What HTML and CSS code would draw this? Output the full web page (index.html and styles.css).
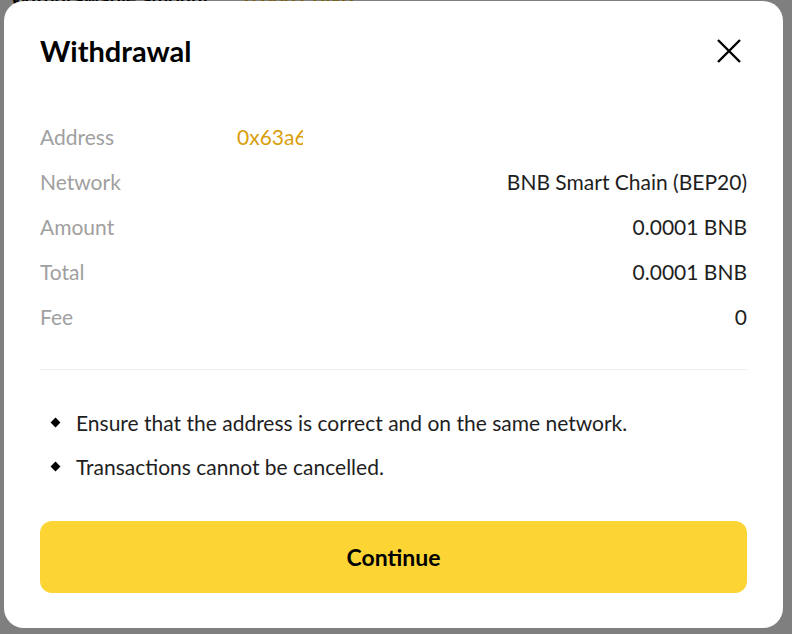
FILE: index.html
```html
<!DOCTYPE html>
<html lang="en">
<head>
    <meta charset="UTF-8">
    <meta name="viewport" content="width=device-width, initial-scale=1.0">
    <title>Withdrawal</title>
    <link rel="stylesheet" href="styles.css">
</head>
<body>
    <div class="page">
        <div class="page-line">Withdrawable amount <span class="page-accent">0.0001 BNB</span></div>
        <div class="page-foot">000.70000 BNB</div>
    </div>

    <div class="overlay">
        <div class="modal">
            <div class="modal-header">
                <h2>Withdrawal</h2>
                <button class="close-btn" aria-label="Close">
                    <svg width="24" height="24" viewBox="0 0 24 24">
                        <path d="M1 1L23 23M23 1L1 23" stroke="#000" stroke-width="2.4" fill="none"/>
                    </svg>
                </button>
            </div>

            <div class="details">
                <div class="detail-row">
                    <span class="label">Address</span>
                    <span class="address">0x63a6f1c9e0b52d7a4c18e3f09b6d2a75c4e81f30</span>
                </div>
                <div class="detail-row">
                    <span class="label">Network</span>
                    <span class="value">BNB Smart Chain (BEP20)</span>
                </div>
                <div class="detail-row">
                    <span class="label">Amount</span>
                    <span class="value">0.0001 BNB</span>
                </div>
                <div class="detail-row">
                    <span class="label">Total</span>
                    <span class="value">0.0001 BNB</span>
                </div>
                <div class="detail-row">
                    <span class="label">Fee</span>
                    <span class="value">0</span>
                </div>
            </div>

            <ul class="notes">
                <li>Ensure that the address is correct and on the same network.</li>
                <li>Transactions cannot be cancelled.</li>
            </ul>

            <button class="continue-btn">Continue</button>
        </div>
    </div>
</body>
</html>
```

FILE: styles.css
```css
body, html {
    margin: 0;
    height: 100%;
    font-family: 'Lato', sans-serif;
    background: #fff;
}

/* page behind the dialog */
.page {
    padding: 0 0 0 10px;
    color: #000;
}

.page-line {
    font-size: 20px;
    margin-top: -14px;
    font-weight: bold;
}

.page-accent {
    color: #f0b90b;
    margin-left: 30px;
}

.page-foot {
    font-size: 20px;
    font-weight: bold;
    margin-top: 592px;
    margin-left: 80px;
}

.overlay {
    position: fixed;
    inset: 0;
    background: rgba(0, 0, 0, 0.5);
    padding: 1px 9px 6px 4px;
}

.modal {
    background: #fff;
    border-radius: 20px;
    height: 627px;
    box-sizing: border-box;
    padding: 36px 36px 35px 36px;
    display: flex;
    flex-direction: column;
}

.modal-header {
    display: flex;
    justify-content: space-between;
    align-items: center;
    height: 28px;
}

.modal-header h2 {
    margin: 0;
    font-size: 29px;
    font-weight: 700;
    color: #000;
    line-height: 28px;
}

.close-btn {
    border: none;
    background: none;
    padding: 0;
    margin-right: 6px;
    width: 24px;
    height: 24px;
    cursor: pointer;
}

.details {
    margin-top: 49px;
}

.detail-row {
    display: flex;
    justify-content: space-between;
    align-items: center;
    height: 45px;
    font-size: 21px;
}

.label {
    color: #a0a0a0;
    width: 197px;
}

.address {
    color: #d99e0b;
    width: 66px;
    overflow: hidden;
    white-space: nowrap;
    margin-right: auto;
}

.value {
    color: #1e1e1e;
}

.notes {
    list-style: none;
    margin: 30px 0 0 0;
    padding: 30px 0 0 0;
    border-top: 1px solid #eeeeee;
}

.notes li {
    display: flex;
    align-items: center;
    height: 44px;
    font-size: 21px;
    color: #1e1e1e;
}

.notes li::before {
    content: '';
    width: 7px;
    height: 7px;
    background: #000;
    transform: rotate(45deg);
    margin: 0 17px 0 12px;
}

.continue-btn {
    margin-top: auto;
    height: 72px;
    border: none;
    border-radius: 12px;
    background: #fcd535;
    font-family: 'Lato', sans-serif;
    font-size: 23px;
    font-weight: 700;
    color: #000;
    cursor: pointer;
}
```
